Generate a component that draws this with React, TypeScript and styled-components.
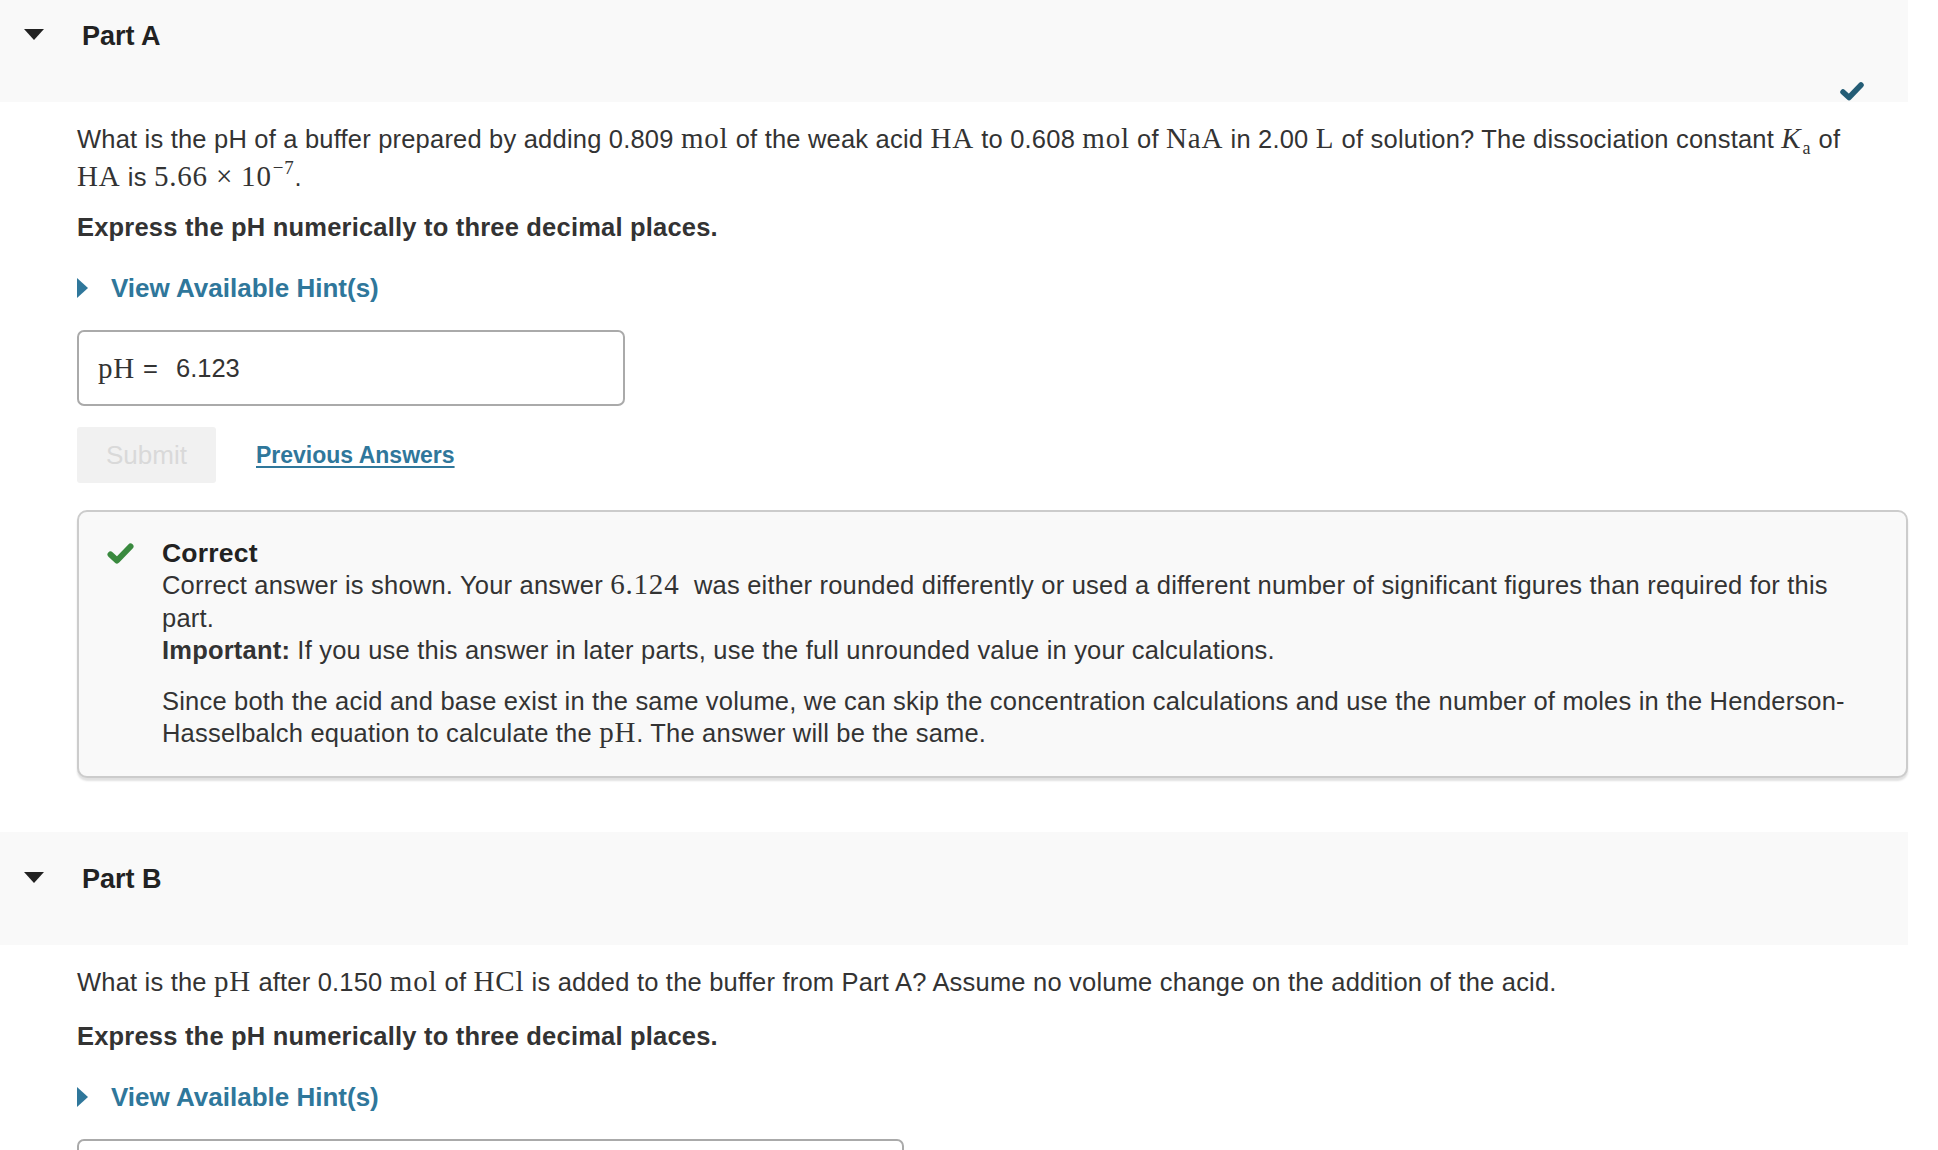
import React from 'react'
import styled, { createGlobalStyle } from 'styled-components'

const GlobalStyle = createGlobalStyle`
  html, body {
    margin: 0;
    padding: 0;
    background: #fff;
  }
  body {
    font-family: "Liberation Sans", Arial, Helvetica, sans-serif;
    color: #333;
    overflow: hidden;
  }
  * {
    box-sizing: border-box;
  }
`

const Page = styled.div`
  width: 1908px;
  margin-top: -11px;
`

const PartHeader = styled.div`
  position: relative;
  height: 113px;
  background: #f9f9f9;
  display: flex;
  align-items: flex-start;
  padding: 29px 0 0 24px;
`

const Caret = styled.span`
  width: 0;
  height: 0;
  margin-top: 11px;
  border-left: 10px solid transparent;
  border-right: 10px solid transparent;
  border-top: 11px solid #222;
`

const PartTitle = styled.h2`
  margin: 0 0 0 38px;
  font-size: 27px;
  line-height: 36px;
  font-weight: 700;
  color: #222;
`

const StatusCheck = styled.svg`
  position: absolute;
  right: 44px;
  bottom: 1px;
  width: 24px;
  height: 20px;
`

const PartBody = styled.div`
  padding: 0 30px 0 77px;
`

const Question = styled.p`
  margin: 18px 0 0;
  font-size: 25.5px;
  letter-spacing: 0.2px;
  line-height: 38px;
`

const Instruction = styled.p<{ $gap: number }>`
  margin: ${(p) => p.$gap}px 0 0;
  font-size: 25.5px;
  letter-spacing: 0.2px;
  line-height: 34px;
  font-weight: 700;
`

const Math = styled.span`
  font-family: "Liberation Serif", "Times New Roman", serif;
  font-size: 29px;
  line-height: 1;
  letter-spacing: 0.8px;
`

const Italic = styled.i`
  font-family: "Liberation Serif", "Times New Roman", serif;
`

const Sub = styled.sub`
  font-size: 18px;
  margin-left: 1px;
  vertical-align: -6px;
  line-height: 0;
`

const Sup = styled.sup`
  font-size: 19px;
  margin-left: 1px;
  vertical-align: 12px;
  line-height: 0;
`

const HintToggle = styled.div`
  margin-top: 26px;
  display: flex;
  align-items: center;
  gap: 23px;
  font-size: 26px;
  line-height: 36px;
  font-weight: 700;
  color: #2f779b;
`

const HintCaret = styled.span`
  width: 0;
  height: 0;
  border-top: 10.5px solid transparent;
  border-bottom: 10.5px solid transparent;
  border-left: 11px solid #2f779b;
`

const AnswerBox = styled.div<{ $width: number }>`
  margin-top: 24px;
  width: ${(p) => p.$width}px;
  height: 76px;
  border: 2px solid #aaa;
  border-radius: 7px;
  display: flex;
  align-items: center;
  padding-left: 19px;
  font-size: 25.5px;
  color: #333;
`

const Equals = styled.span`
  margin: 0 18px 0 8px;
`

const ActionRow = styled.div`
  margin-top: 21px;
  display: flex;
  align-items: center;
`

const SubmitButton = styled.button`
  width: 139px;
  height: 56px;
  border: none;
  border-radius: 3px;
  background: #f1f1f1;
  color: #d9d9d9;
  font-family: inherit;
  font-size: 26px;
  padding: 0;
`

const PrevLink = styled.a`
  margin-left: 40px;
  font-size: 23px;
  font-weight: 700;
  color: #2f779b;
  text-decoration: underline;
  text-underline-offset: 3px;
`

const Feedback = styled.div`
  margin: 27px -30px 54px 0;
  background: #f9f9f9;
  border: 2px solid #ccc;
  border-radius: 10px;
  box-shadow: 0 3px 2px rgba(0, 0, 0, 0.12);
  display: flex;
  align-items: flex-start;
  padding: 25px 30px 26px 28px;
`

const FeedbackIcon = styled.svg`
  flex: none;
  width: 27px;
  height: 21px;
  margin-top: 6px;
`

const FeedbackText = styled.div`
  margin-left: 28px;
  font-size: 25.5px;
  letter-spacing: 0.2px;
  line-height: 32.5px;
  color: #333;

  p {
    margin: 0;
  }

  p + p {
    margin-top: 18px;
  }
`

const FeedbackTitle = styled.div`
  font-size: 26.5px;
  font-weight: 700;
  line-height: 32px;
  color: #222;
`

export default function App() {
  return (
    <>
      <GlobalStyle />
      <Page>
        <PartHeader>
          <Caret />
          <PartTitle>Part A</PartTitle>
          <StatusCheck viewBox="0 0 24 20">
            <path d="M3 11 L9 16.5 L21 4" fill="none" stroke="#245d76" strokeWidth="5.5" strokeLinecap="round" strokeLinejoin="round" />
          </StatusCheck>
        </PartHeader>
        <PartBody>
          <Question>
            What is the pH of a buffer prepared by adding 0.809 <Math>mol</Math> of the weak acid <Math>HA</Math> to
            0.608 <Math>mol</Math> of <Math>NaA</Math> in 2.00 <Math>L</Math> of solution? The dissociation constant{' '}
            <Math>
              <Italic>K</Italic>
              <Sub>a</Sub>
            </Math>{' '}
            of <Math>HA</Math> is{' '}
            <Math>
              5.66 × 10<Sup>−7</Sup>
            </Math>
            .
          </Question>
          <Instruction $gap={14}>Express the pH numerically to three decimal places.</Instruction>
          <HintToggle>
            <HintCaret />
            View Available Hint(s)
          </HintToggle>
          <AnswerBox $width={548}>
            <Math>pH</Math>
            <Equals>=</Equals>
            6.123
          </AnswerBox>
          <ActionRow>
            <SubmitButton disabled>Submit</SubmitButton>
            <PrevLink>Previous Answers</PrevLink>
          </ActionRow>
          <Feedback>
            <FeedbackIcon viewBox="0 0 27 21">
              <path d="M3.5 11.5 L10 17.5 L23.5 3.5" fill="none" stroke="#3a8a3f" strokeWidth="6" strokeLinecap="round" strokeLinejoin="round" />
            </FeedbackIcon>
            <FeedbackText>
              <FeedbackTitle>Correct</FeedbackTitle>
              <p>
                Correct answer is shown. Your answer <Math>6.124</Math>&nbsp; was either rounded differently or used a
                different number of significant figures than required for this part.
                <br />
                <b>Important:</b> If you use this answer in later parts, use the full unrounded value in your
                calculations.
              </p>
              <p>
                Since both the acid and base exist in the same volume, we can skip the concentration calculations and use
                the number of moles in the Henderson-Hasselbalch equation to calculate the <Math>pH</Math>. The answer
                will be the same.
              </p>
            </FeedbackText>
          </Feedback>
        </PartBody>

        <PartHeader>
          <Caret />
          <PartTitle>Part B</PartTitle>
        </PartHeader>
        <PartBody>
          <Question>
            What is the <Math>pH</Math> after 0.150 <Math>mol</Math> of <Math>HCl</Math> is added to the buffer from Part
            A? Assume no volume change on the addition of the acid.
          </Question>
          <Instruction $gap={18}>Express the pH numerically to three decimal places.</Instruction>
          <HintToggle>
            <HintCaret />
            View Available Hint(s)
          </HintToggle>
          <AnswerBox $width={827} />
        </PartBody>
      </Page>
    </>
  )
}
